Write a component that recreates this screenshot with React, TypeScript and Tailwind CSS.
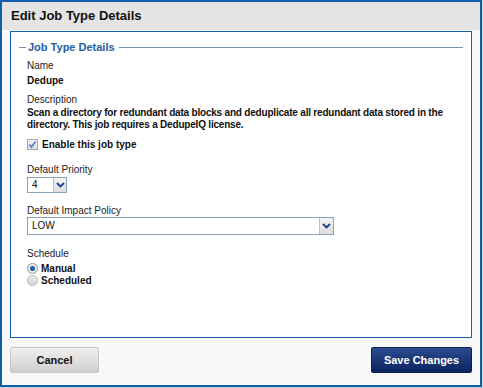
import React from "react";

const font = { fontFamily: '"Liberation Sans", Arial, sans-serif' };

const Label = ({ children }: { children: React.ReactNode }) => (
  <div className="text-[10px] leading-[12px] text-[#222]">{children}</div>
);

const Arrow = () => (
  <svg width="9" height="6" viewBox="0 0 9 6">
    <path d="M1 1 L4.5 4.5 L8 1" fill="none" stroke="#1c3f8a" strokeWidth="1.8" />
  </svg>
);

export default function App() {
  return (
    <div className="w-[483px] h-[388px] bg-[#cfd3d6] overflow-hidden" style={font}>
      <div className="w-[482px] h-[387px] border-2 border-[#0f5ea8] bg-[#f8f8f8] flex flex-col">
        {/* header */}
        <div className="h-[28px] bg-[#e4e4e4] px-[9px] flex items-center">
          <span className="text-[13px] font-bold text-[#111]">Edit Job Type Details</span>
        </div>

        {/* body */}
        <div className="px-[8px] pt-[1px]">
          <div className="h-[307px] border border-[#1560a8] bg-white px-[8px] pt-[7px]">
            <div className="flex items-center gap-[2px]">
              <div className="w-[7px] h-px bg-[#6f94b8]" />
              <span className="text-[11px] font-bold text-[#1f5ea0]">Job Type Details</span>
              <div className="flex-1 h-px bg-[#6f94b8] ml-[2px]" />
            </div>

            <div className="pl-[8px] pt-[4px]">
              <Label>Name</Label>
              <div className="text-[10px] leading-[14px] font-bold text-[#111] mt-[2px]">Dedupe</div>

              <div className="mt-[6px]">
                <Label>Description</Label>
              </div>
              <div className="text-[10px] leading-[12px] font-bold text-[#111] mt-[1px] tracking-[-0.2px]">
                Scan a directory for redundant data blocks and deduplicate all redundant data stored in the
                directory. This job requires a DedupeIQ license.
              </div>

              <div className="flex items-center gap-[4px] mt-[6px]">
                <div className="w-[11px] h-[11px] border border-[#a9a9a9] bg-gradient-to-b from-[#f2f2f2] to-[#dcdcdc] flex items-center justify-center">
                  <svg width="9" height="9" viewBox="0 0 9 9">
                    <path d="M1.5 4.5 L3.5 7 L7.5 1.5" fill="none" stroke="#4a78b8" strokeWidth="1.4" />
                  </svg>
                </div>
                <span className="text-[10px] font-bold text-[#111]">Enable this job type</span>
              </div>

              <div className="mt-[12px]">
                <Label>Default Priority</Label>
              </div>
              <div className="mt-[1px] w-[40px] h-[16px] border border-[#8aa1b8] flex">
                <div className="flex-1 text-[10px] leading-[14px] pl-[4px] text-[#111]">4</div>
                <div className="w-[13px] border-l border-[#b8c4d0] bg-gradient-to-b from-[#f4f4f4] to-[#dedede] flex items-center justify-center">
                  <Arrow />
                </div>
              </div>

              <div className="mt-[12px]">
                <Label>Default Impact Policy</Label>
              </div>
              <div className="mt-[0px] w-[307px] h-[18px] border border-[#8aa1b8] flex">
                <div className="flex-1 text-[10px] leading-[16px] pl-[4px] text-[#111]">LOW</div>
                <div className="w-[14px] border-l border-[#b8c4d0] bg-gradient-to-b from-[#f4f4f4] to-[#dedede] flex items-center justify-center">
                  <Arrow />
                </div>
              </div>

              <div className="mt-[13px]">
                <Label>Schedule</Label>
              </div>
              <div className="flex items-center gap-[3px] mt-[3px] h-[12px]">
                <div className="w-[11px] h-[11px] rounded-full border border-[#9a9a9a] bg-[#e8e8e8] flex items-center justify-center">
                  <div className="w-[5px] h-[5px] rounded-full bg-[#1d5fa8]" />
                </div>
                <span className="text-[10px] font-bold text-[#111]">Manual</span>
              </div>
              <div className="flex items-center gap-[3px] h-[12px]">
                <div className="w-[11px] h-[11px] rounded-full border border-[#b5b5b5] bg-gradient-to-b from-[#eeeeee] to-[#d4d4d4]" />
                <span className="text-[10px] font-bold text-[#111]">Scheduled</span>
              </div>
            </div>
          </div>
        </div>

        {/* footer */}
        <div className="px-[8px] pt-[9px] flex justify-between">
          <button className="w-[89px] h-[26px] rounded-[2px] border border-[#c6c6c6] bg-gradient-to-b from-[#f0f0f0] to-[#cfcfcf] text-[11px] font-bold text-[#111]">
            Cancel
          </button>
          <button className="w-[101px] h-[26px] rounded-[2px] border border-[#0a1f4f] bg-gradient-to-b from-[#2a4c8f] to-[#0c2460] text-[11px] font-bold text-white">
            Save Changes
          </button>
        </div>
      </div>
    </div>
  );
}
